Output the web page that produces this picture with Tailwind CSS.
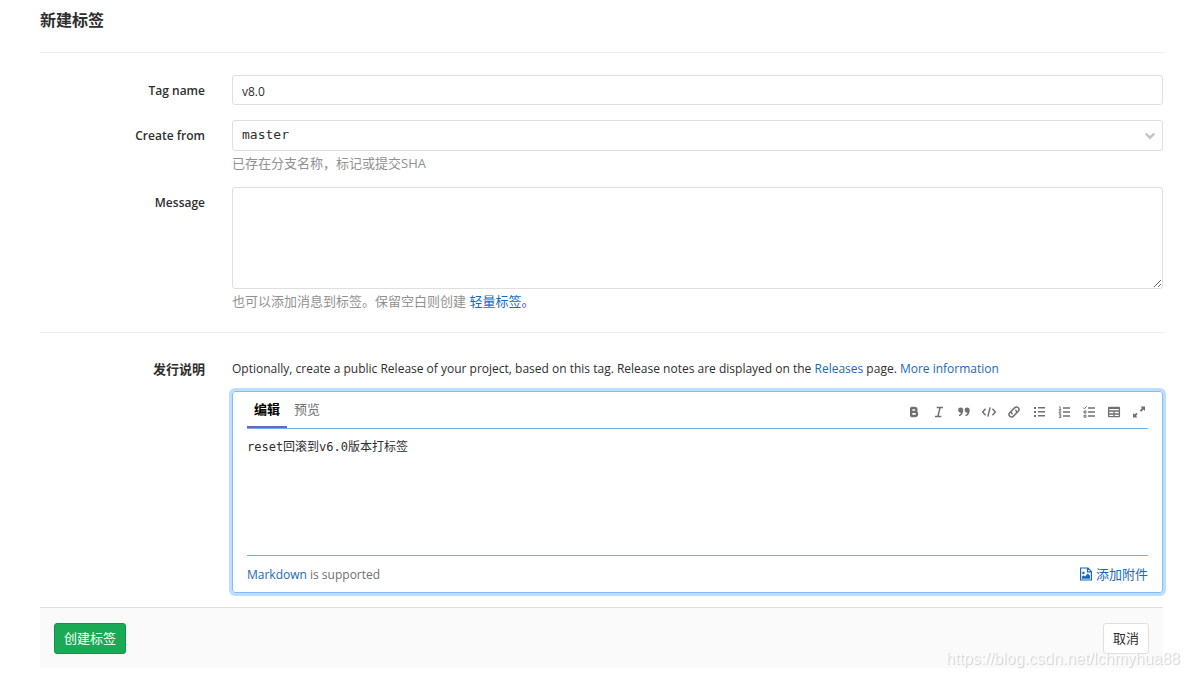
<!doctype html>
<html lang="zh-CN">
  <head>
    <meta charset="UTF-8" />
    <meta name="viewport" content="width=device-width, initial-scale=1.0" />
    <title>新建标签</title>
    <script src="https://cdn.jsdelivr.net/npm/@tailwindcss/browser@4"></script>
  </head>
  <body class="bg-white font-['Open_Sans','Noto_Sans_CJK_SC',sans-serif] text-[13px] leading-5 text-[#2e2e2e]">

    <main class="pl-10 pr-[26px] pt-2">
      <h1 class="text-base leading-6 font-bold">新建标签</h1>
      <hr class="mt-5 border-[#eeeeee]">

      <form class="mt-[22px]">
        <div class="grid grid-cols-[165px_1fr] gap-x-[27px]">
          <label for="tag-name" class="pt-[6px] text-right font-semibold text-xs leading-5">Tag name</label>
          <input type="text" id="tag-name" value="v8.0" class="h-[30px] w-full rounded-[3px] border border-[#dfdfdf] px-[9px] pt-[2px] text-xs outline-none">
        </div>

        <div class="mt-[15px] grid grid-cols-[165px_1fr] gap-x-[27px]">
          <label for="create-from" class="pt-[6px] text-right font-semibold text-xs leading-5">Create from</label>
          <div>
            <div class="relative">
              <select id="create-from" class="block h-[31px] w-full appearance-none rounded-[3px] border border-[#dfdfdf] bg-white px-[9px] pb-[2px] font-['DejaVu_Sans_Mono',monospace] outline-none">
                <option>master</option>
              </select>
              <svg class="pointer-events-none absolute right-2 top-3 h-2 w-[10px]" viewBox="0 0 10 8" fill="none" stroke="#c4c4c4" stroke-width="2.4"><path d="M.8 1.5 5 5.7l4.200-4.200"/></svg>
            </div>
            <p class="mt-[2px] leading-5 text-[#919191]">已存在分支名称，标记或提交SHA</p>
          </div>
        </div>

        <div class="mt-[14px] grid grid-cols-[165px_1fr] gap-x-[27px]">
          <label for="message" class="pt-[6px] text-right font-semibold text-xs leading-5">Message</label>
          <div>
            <textarea id="message" class="block h-[102px] w-full resize-y rounded-[3px] border border-[#dfdfdf] px-[9px] outline-none"></textarea>
            <p class="mt-[2px] leading-5 text-[#919191]">也可以添加消息到标签。保留空白则创建 <a href="#" class="text-[#1b69b6]">轻量标签</a><span class="text-[#1b69b6]">。</span></p>
          </div>
        </div>

        <hr class="mt-[21px] border-[#eeeeee]">

        <div class="mt-[26px] grid grid-cols-[165px_1fr] gap-x-[27px]">
          <label for="release-notes" class="text-right font-bold">发行说明</label>
          <div>
            <p class="text-xs leading-5">Optionally, create a public Release of your project, based on this tag. Release notes are displayed on the <a href="#" class="text-[#1b69b6]">Releases</a> page. <a href="#" class="text-[#1b69b6]">More information</a></p>

            <div class="mt-3 rounded-[3px] border border-[#80bdff] px-[14px] shadow-[0_0_0_3px_#bfdeff]">
              <div class="flex h-[37px] items-stretch justify-between border-b border-[#73afea]">
                <div class="flex">
                  <button type="button" class="border-b-2 border-[#6666c4] px-[7px] pb-px font-bold text-black">编辑</button>
                  <button type="button" class="border-b-2 border-transparent px-[7px] pb-px text-[#707070]">预览</button>
                </div>
                <div class="flex items-center gap-[9px] pr-px pt-1 text-[#707070]">
                  <button type="button" aria-label="Bold"><svg class="h-4 w-4" viewBox="0 0 14 14" fill="none" stroke="currentColor" stroke-width="2"><path d="M4.500 3v8M4.500 3.500H7.500a1.600 1.600 0 0 1 0 3.300H4.500M7 6.800h.800a1.800 1.800 0 0 1 0 3.700H4.500"/></svg></button>
                  <button type="button" aria-label="Italic"><svg class="h-4 w-4" viewBox="0 0 14 14" fill="none" stroke="currentColor" stroke-width="1.300"><path d="M5 3h5.500M3.500 11H9M8 3 6 11"/></svg></button>
                  <button type="button" aria-label="Quote"><svg class="h-4 w-4" viewBox="0 0 14 14" fill="currentColor"><path d="M4 3a2.200 2.200 0 0 1 2.300 2.500c0 2.600-1.100 4.600-3.400 5.200l-.5-1.100c1.200-.5 1.800-1.100 1.900-2A2.200 2.200 0 0 1 4 3zM9.700 3a2.200 2.200 0 0 1 2.300 2.500c0 2.600-1.100 4.600-3.400 5.200l-.5-1.100c1.200-.5 1.800-1.100 1.900-2A2.200 2.200 0 0 1 9.700 3z"/></svg></button>
                  <button type="button" aria-label="Code"><svg class="h-4 w-4" viewBox="0 0 14 14" fill="none" stroke="currentColor" stroke-width="1.300"><path d="M4 4.200 1.400 7 4 9.800M10 4.200 12.600 7 10 9.800M8 3 6 11"/></svg></button>
                  <button type="button" aria-label="Link"><svg class="h-4 w-4" viewBox="0 0 14 14" fill="none" stroke="currentColor" stroke-width="1.300" stroke-linecap="round"><path d="M5.400 8.600a2.200 2.200 0 0 1 0-3.100l2.300-2.300a2.200 2.200 0 0 1 3.100 3.100l-1 1M8.600 5.400a2.200 2.200 0 0 1 0 3.100l-2.300 2.300a2.200 2.200 0 0 1-3.100-3.100l1-1"/></svg></button>
                  <button type="button" aria-label="Bulleted list"><svg class="h-4 w-4" viewBox="0 0 16 16" fill="currentColor"><path d="M3 3h2v2H3zM3 7h2v2H3zM3 11h2v2H3zM7 3h7v1.500H7zM7 7h7v1.500H7zM7 11h7v1.500H7z"/></svg></button>
                  <button type="button" aria-label="Numbered list"><svg class="h-4 w-4" viewBox="0 0 16 16" fill="none" stroke="currentColor"><path stroke-width="1.400" d="M7 4h7M7 8h7M7 12h7"/><path stroke-width=".9" d="M3.200 2.800h1v2.500M2.800 5.500h2.400M2.800 6.800h2v1.200H3.200v1.300h2M2.800 10.700h2v2.800h-2M3.300 12h1.500"/></svg></button>
                  <button type="button" aria-label="Task list"><svg class="h-4 w-4" viewBox="0 0 16 16" fill="none" stroke="currentColor"><path stroke-width="1.400" d="M7 4h7M7 8h7M7 12h7"/><path stroke-width="1" d="m2.200 3.700 1.200 1.200 2.200-2.600M3 7h2v2H3zM3 11.200h2v2H3z"/></svg></button>
                  <button type="button" aria-label="Table"><svg class="h-4 w-4" viewBox="0 0 16 16" fill="none" stroke="currentColor" stroke-width="1.300"><rect x="2.600" y="3.300" width="10.800" height="9.400" rx=".6"/><path stroke-width="2" d="M2.600 4h10.800"/><path d="M2.600 7h10.800M2.600 10h10.800M8 6.500v6"/></svg></button>
                  <button type="button" aria-label="Full screen"><svg class="h-4 w-4" viewBox="0 0 16 16" fill="currentColor"><path d="M9.500 2.500H14V7l-1.500-1.500-2.300 2.200L8.900 6.400 11 4zM6.500 13.500H2V9l1.500 1.500L5.300 8.700l1.300 1.300L5 12z"/></svg></button>
                </div>
              </div>

              <textarea id="release-notes" class="block h-[126px] w-full resize-none pt-2 font-['DejaVu_Sans_Mono','Noto_Sans_CJK_SC',monospace] text-xs leading-5 outline-none">reset回滚到v6.0版本打标签</textarea>

              <div class="flex h-[37px] items-center justify-between border-t border-[#73afea]">
                <p class="pt-px text-xs leading-5 text-[#707070]"><a href="#" class="text-[#1b69b6]">Markdown</a> is supported</p>
                <button type="button" class="flex items-center gap-1 text-[#1b69b6]">
                  <svg class="h-[14px] w-3" viewBox="0 0 12 14" fill="none" stroke="currentColor" stroke-width="1.200"><path d="M.6 1h7.400l3.400 3.400V13H.6zM7.500 1v3.900h3.900"/><path fill="currentColor" stroke="none" d="M2 11.700V9.500l1.500-1.300 1.500 1.300L7.800 6.500 10 8.700v3zM2.300 4.800h2.200V7H2.300z"/></svg>
                  添加附件
                </button>
              </div>
            </div>
          </div>
        </div>

        <div class="mt-[14px] flex h-[61px] items-start justify-between border-t border-[#dfdfdf] bg-[#fafafa] px-[14px] pt-[15px]">
          <button type="submit" class="h-[31px] rounded-[3px] border border-[#168f48] bg-[#1aaa55] px-[9px] pb-[2px] text-white">创建标签</button>
          <button type="button" class="h-[31px] rounded-[3px] border border-[#dfdfdf] bg-white px-[9px] pb-[2px]">取消</button>
        </div>
      </form>
    </main>

    <div class="fixed bottom-2 right-[9px] font-['Liberation_Sans',sans-serif] text-base leading-5 text-white/70 [text-shadow:1px_1px_1px_#d0d0d0]">https://blog.csdn.net/lchmyhua88</div>

  </body>
</html>
